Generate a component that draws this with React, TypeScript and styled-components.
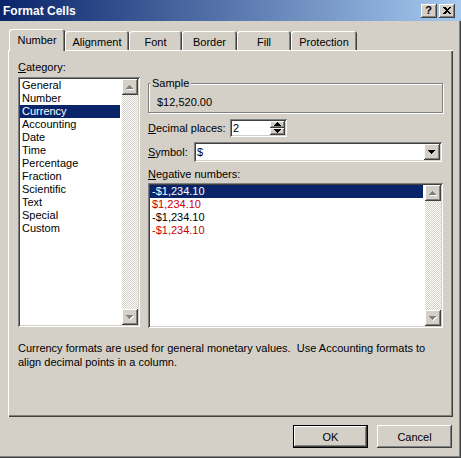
import React from "react";
import styled, { createGlobalStyle } from "styled-components";

const FONT = `"Liberation Sans", Arial, sans-serif`;

const GlobalStyle = createGlobalStyle`
  html, body { margin: 0; padding: 0; background: #d4d0c8; }
  body { font-family: ${FONT}; font-size: 11px; color: #000; }
  * { box-sizing: border-box; }
`;

const raised = `box-shadow: inset -1px -1px #404040, inset 1px 1px #fff, inset -2px -2px #808080, inset 2px 2px #d4d0c8;`;
const sunken = `box-shadow: inset 1px 1px #808080, inset -1px -1px #fff, inset 2px 2px #404040, inset -2px -2px #d4d0c8;`;

const Window = styled.div`
  width: 461px;
  height: 458px;
  background: #d4d0c8;
  display: flex;
  flex-direction: column;
  box-shadow: inset -1px -1px #404040, inset -2px -2px #808080;
  overflow: hidden;
`;

const TitleBar = styled.div`
  height: 21px;
  flex-shrink: 0;
  display: flex;
  align-items: center;
  justify-content: space-between;
  padding: 0 6px 0 3px;
  background: linear-gradient(to right, #0a246a 0%, #a6caf0 100%);
`;

const Title = styled.span`
  color: #fff;
  font-weight: bold;
  font-size: 12px;
`;

const TitleButtons = styled.div`
  display: flex;
  gap: 2px;
`;

const TitleButton = styled.div`
  width: 16px;
  height: 14px;
  background: #d4d0c8;
  ${raised}
  display: flex;
  align-items: center;
  justify-content: center;
  font-weight: bold;
  font-size: 11px;
  padding: 0 1px 1px 0;
`;

const Body = styled.div`
  flex: 1;
  display: flex;
  flex-direction: column;
  padding: 8px 8px 0 8px;
`;

const TabStrip = styled.div`
  height: 21px;
  display: flex;
  align-items: flex-end;
  padding-left: 1px;
`;

const Tab = styled.div<{ $w: number; $active?: boolean }>`
  width: ${(p) => p.$w}px;
  height: ${(p) => (p.$active ? 22 : 19)}px;
  margin-bottom: ${(p) => (p.$active ? -1 : 0)}px;
  position: relative;
  z-index: ${(p) => (p.$active ? 2 : 0)};
  background: #d4d0c8;
  border-radius: 3px 3px 0 0;
  box-shadow: inset 1px 1px #fff, inset -1px 0 #404040, inset -2px 0 #808080;
  display: flex;
  align-items: center;
  justify-content: center;
  padding-top: ${(p) => (p.$active ? 0 : 2)}px;
`;

const Panel = styled.div`
  height: 367px;
  background: #d4d0c8;
  box-shadow: inset 1px 1px #fff, inset -1px -1px #404040, inset -2px -2px #808080;
  padding: 11px 10px 0 10px;
  display: grid;
  grid-template-columns: 122px 295px;
  grid-template-rows: auto 1fr;
  column-gap: 8px;
  position: relative;
  z-index: 1;
`;

const Column = styled.div<{ $top?: number }>`
  display: flex;
  flex-direction: column;
  padding-top: ${(p) => p.$top ?? 0}px;
`;

const Label = styled.div<{ $w?: number; $mt?: number }>`
  line-height: 13px;
  white-space: nowrap;
  ${(p) => (p.$w ? `width: ${p.$w}px; flex-shrink: 0;` : "")}
  margin-top: ${(p) => p.$mt ?? 0}px;
`;

const ListBox = styled.div<{ $h: number; $mt: number }>`
  height: ${(p) => p.$h}px;
  margin-top: ${(p) => p.$mt}px;
  background: #fff;
  ${sunken}
  padding: 2px;
  display: flex;
`;

const Items = styled.div`
  flex: 1;
  display: flex;
  flex-direction: column;
  padding-right: 2px;
`;

const Item = styled.div<{ $sel?: boolean; $red?: boolean }>`
  height: 13px;
  line-height: 13px;
  padding-left: 2px;
  white-space: nowrap;
  background: ${(p) => (p.$sel ? "#0a246a" : "transparent")};
  color: ${(p) => (p.$sel ? "#fff" : p.$red ? "#cc0000" : "#000")};
`;

const ScrollTrack = styled.div`
  width: 16px;
  display: flex;
  flex-direction: column;
  justify-content: space-between;
  background: repeating-conic-gradient(#d4d0c8 0 25%, #fff 0 50%) 0 0 / 2px 2px;
`;

const ArrowButton = styled.div<{ $w?: number; $h?: number }>`
  width: ${(p) => p.$w ?? 16}px;
  height: ${(p) => p.$h ?? 16}px;
  background: #d4d0c8;
  ${raised}
  display: flex;
  align-items: center;
  justify-content: center;
  flex-shrink: 0;
`;

const GroupBox = styled.fieldset`
  margin: 0;
  padding: 6px 8px 3px 8px;
  border: 1px solid #808080;
  box-shadow: 1px 1px 0 #fff, inset 1px 1px 0 #fff;
  min-width: 0;
  line-height: 13px;

  legend {
    margin-left: -7px;
    padding: 0 2px;
    line-height: 13px;
    background: #d4d0c8;
  }
`;

const FieldRow = styled.div<{ $mt: number }>`
  display: flex;
  align-items: center;
  margin-top: ${(p) => p.$mt}px;
`;

const Field = styled.div<{ $w: number; $h: number }>`
  width: ${(p) => p.$w}px;
  height: ${(p) => p.$h}px;
  background: #fff;
  ${sunken}
  padding: 2px;
  display: flex;
  align-items: stretch;
`;

const FieldText = styled.div`
  flex: 1;
  display: flex;
  align-items: center;
  padding-left: 1px;
`;

const SpinButtons = styled.div`
  display: flex;
  flex-direction: column;
`;

const Description = styled.div`
  grid-column: 1 / 3;
  margin-top: 13px;
  line-height: 14px;
`;

const Footer = styled.div`
  display: flex;
  justify-content: flex-end;
  gap: 9px;
  margin-top: 8px;
  padding-right: 1px;
`;

const Button = styled.div<{ $default?: boolean }>`
  width: 75px;
  height: 23px;
  display: flex;
  align-items: center;
  justify-content: center;
  background: #d4d0c8;
  ${(p) =>
    p.$default
      ? `box-shadow: inset 0 0 0 1px #000, inset -2px -2px #404040, inset 2px 2px #fff, inset -3px -3px #808080;`
      : raised}
`;

function Arrow({ down, disabled }: { down?: boolean; disabled?: boolean }) {
  const d = down ? "M0 0H7V1H6V2H5V3H4V4H3V3H2V2H1V1H0Z" : "M3 0H4V1H5V2H6V3H7V4H0V3H1V2H2V1H3Z";
  return (
    <svg width="8" height="5" viewBox="0 0 8 5" shapeRendering="crispEdges">
      {disabled && <path d={d} fill="#fff" transform="translate(1,1)" />}
      <path d={d} fill={disabled ? "#808080" : "#000"} />
    </svg>
  );
}

function CloseGlyph() {
  return (
    <svg width="8" height="7" viewBox="0 0 8 7" shapeRendering="crispEdges">
      <path d="M0 0H2L4 2L6 0H8L5 3.5L8 7H6L4 5L2 7H0L3 3.5Z" fill="#000" />
    </svg>
  );
}

const categories = [
  "General",
  "Number",
  "Currency",
  "Accounting",
  "Date",
  "Time",
  "Percentage",
  "Fraction",
  "Scientific",
  "Text",
  "Special",
  "Custom",
];

const negatives = [
  { text: "-$1,234.10", red: false },
  { text: "$1,234.10", red: true },
  { text: "-$1,234.10", red: false },
  { text: "-$1,234.10", red: true },
];

const tabs = [
  { name: "Number", w: 56 },
  { name: "Alignment", w: 64 },
  { name: "Font", w: 53 },
  { name: "Border", w: 55 },
  { name: "Fill", w: 54 },
  { name: "Protection", w: 66 },
];

function Scrollbar() {
  return (
    <ScrollTrack>
      <ArrowButton>
        <Arrow disabled />
      </ArrowButton>
      <ArrowButton>
        <Arrow down disabled />
      </ArrowButton>
    </ScrollTrack>
  );
}

export default function App() {
  return (
    <>
      <GlobalStyle />
      <Window>
        <TitleBar>
          <Title>Format Cells</Title>
          <TitleButtons>
            <TitleButton>?</TitleButton>
            <TitleButton>
              <CloseGlyph />
            </TitleButton>
          </TitleButtons>
        </TitleBar>
        <Body>
          <TabStrip>
            {tabs.map((t, i) => (
              <Tab key={t.name} $w={t.w} $active={i === 0}>
                {t.name}
              </Tab>
            ))}
          </TabStrip>
          <Panel>
            <Column>
              <Label>
                <u>C</u>ategory:
              </Label>
              <ListBox $h={250} $mt={3}>
                <Items>
                  {categories.map((c) => (
                    <Item key={c} $sel={c === "Currency"}>
                      {c}
                    </Item>
                  ))}
                </Items>
                <Scrollbar />
              </ListBox>
            </Column>
            <Column $top={16}>
              <GroupBox>
                <legend>Sample</legend>
                $12,520.00
              </GroupBox>
              <FieldRow $mt={6}>
                <Label $w={82}>
                  <u>D</u>ecimal places:
                </Label>
                <Field $w={57} $h={18}>
                  <FieldText>2</FieldText>
                  <SpinButtons>
                    <ArrowButton $w={15} $h={7}>
                      <Arrow />
                    </ArrowButton>
                    <ArrowButton $w={15} $h={7}>
                      <Arrow down />
                    </ArrowButton>
                  </SpinButtons>
                </Field>
              </FieldRow>
              <FieldRow $mt={5}>
                <Label $w={46}>
                  <u>S</u>ymbol:
                </Label>
                <Field $w={248} $h={20}>
                  <FieldText>$</FieldText>
                  <ArrowButton>
                    <Arrow down />
                  </ArrowButton>
                </Field>
              </FieldRow>
              <Label $mt={6}>
                <u>N</u>egative numbers:
              </Label>
              <ListBox $h={145} $mt={2}>
                <Items>
                  {negatives.map((n, i) => (
                    <Item key={i} $sel={i === 0} $red={n.red}>
                      {n.text}
                    </Item>
                  ))}
                </Items>
                <Scrollbar />
              </ListBox>
            </Column>
            <Description>
              Currency formats are used for general monetary values.&nbsp; Use Accounting formats to
              <br />
              align decimal points in a column.
            </Description>
          </Panel>
          <Footer>
            <Button $default>OK</Button>
            <Button>Cancel</Button>
          </Footer>
        </Body>
      </Window>
    </>
  );
}
